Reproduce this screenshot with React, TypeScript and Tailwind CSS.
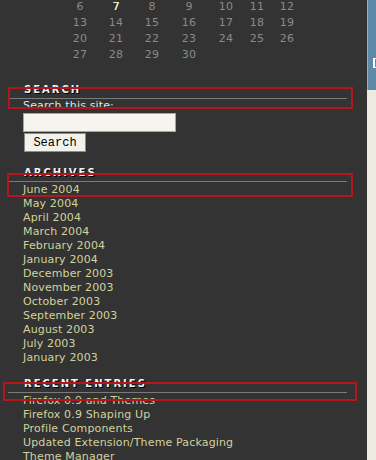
import React from "react";

const rows: (string | null)[][] = [
  ["6", "7", "8", "9", "10", "11", "12"],
  ["13", "14", "15", "16", "17", "18", "19"],
  ["20", "21", "22", "23", "24", "25", "26"],
  ["27", "28", "29", "30", null, null, null],
];

const archives = [
  "June 2004",
  "May 2004",
  "April 2004",
  "March 2004",
  "February 2004",
  "January 2004",
  "December 2003",
  "November 2003",
  "October 2003",
  "September 2003",
  "August 2003",
  "July 2003",
  "January 2003",
];

const recent = [
  "Firefox 0.9 and Themes",
  "Firefox 0.9 Shaping Up",
  "Profile Components",
  "Updated Extension/Theme Packaging",
  "Theme Manager",
];

function Heading({ children }: { children: string }) {
  return (
    <div
      className="pl-[24px] h-[12px] leading-[12px] text-[10px] font-bold tracking-[2px] text-[#f2f2f2] [text-shadow:1px_1px_0_#000]"
      style={{ fontFamily: '"DejaVu Sans", Verdana, sans-serif' }}
    >
      {children}
    </div>
  );
}

function Rule({ mt }: { mt: string }) {
  return <div className={`ml-[8px] w-[339px] h-px bg-[#7a7a7a] ${mt}`} />;
}

export default function App() {
  return (
    <div
      className="relative w-[376px] h-[460px] overflow-hidden flex bg-[#333333]"
      style={{ fontFamily: '"DejaVu Sans", Verdana, sans-serif' }}
    >
      <div className="w-[367px] h-full bg-[#333333] text-[11px] tracking-[0.15px]">
        {/* calendar */}
        <div className="mt-[-1px] ml-[62px] grid grid-cols-[36px_36px_36px_38px_36px_26px_34px]">
          {rows.flat().map((d, i) => (
            <div
              key={i}
              className={`h-[16px] leading-[16px] text-center ${
                d === "7" ? "text-[#ecedc4] [text-shadow:0.4px_0_0_#ecedc4]" : "text-[#8a8a8a]"
              }`}
            >
              {d ?? ""}
            </div>
          ))}
        </div>

        {/* search */}
        <div className="mt-[21px]">
          <Heading>SEARCH</Heading>
          <Rule mt="mt-[2px]" />
          <div className="pl-[23px]">
            <div className="h-[14px] leading-[14px] text-[#e2e2e2]">Search this site:</div>
            <div className="w-[153px] h-[19px] bg-[#f5f5ee] border border-[#9aa8b4]" />
            <div
              className="mt-[1px] ml-[1px] w-[62px] h-[19px] bg-[#f3f2ea] border border-[#8c8c8c] flex items-center justify-center text-black text-[12px] tracking-normal"
              style={{ fontFamily: '"Liberation Mono", "Courier New", monospace' }}
            >
              Search
            </div>
          </div>
        </div>

        {/* archives */}
        <div className="mt-[15px]">
          <Heading>ARCHIVES</Heading>
          <Rule mt="mt-[2px]" />
          <div className="pl-[23px] mt-[1px]">
            {archives.map((a) => (
              <div key={a} className="h-[14px] leading-[14px] text-[#d2d29c]">
                {a}
              </div>
            ))}
          </div>
        </div>

        {/* recent entries */}
        <div className="mt-[13px]">
          <Heading>RECENT ENTRIES</Heading>
          <Rule mt="mt-[2px]" />
          <div className="pl-[23px] mt-[1px]">
            {recent.map((a) => (
              <div key={a} className="h-[14px] leading-[14px] text-[#d2d29c] whitespace-nowrap">
                {a}
              </div>
            ))}
          </div>
        </div>
      </div>

      {/* right edge strip */}
      <div className="w-[9px] h-full flex flex-col">
        <div className="relative h-[90px] bg-[#5f8aa7] border-l border-[#8fb1c6]">
          <div className="absolute left-[5px] top-[58px] w-[3px] h-[10px] border-l-2 border-t border-b border-white" />
        </div>
        <div className="flex-1 bg-[#ecebe2]" />
      </div>

      {/* annotation boxes */}
      <div className="absolute left-[8px] top-[87px] w-[345px] h-[22px] border-2 border-[#b3161d]" />
      <div className="absolute left-[7px] top-[173px] w-[346px] h-[24px] border-2 border-[#b3161d]" />
      <div className="absolute left-[3px] top-[382px] w-[354px] h-[19px] border-2 border-[#b3161d]" />
    </div>
  );
}
